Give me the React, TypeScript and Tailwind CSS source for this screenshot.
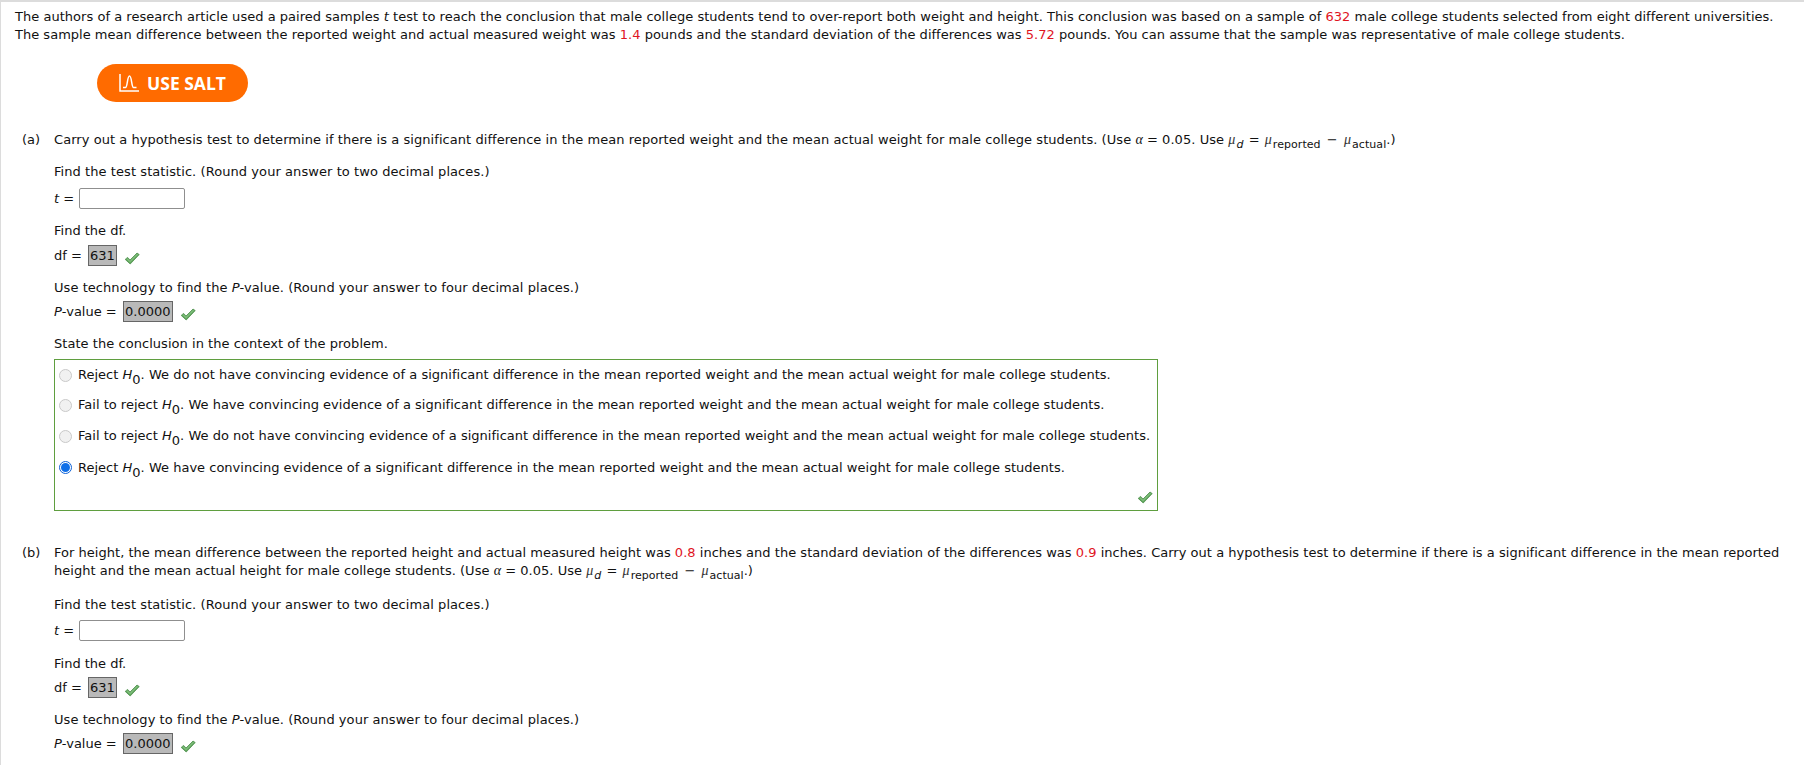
// Paired samples t test question page
import type { ReactNode } from 'react';

function Red({ children }: { children: ReactNode }) {
  return <span className="text-[#e0141e]">{children}</span>;
}

function Mu({ sub, italic }: { sub: string; italic?: boolean }) {
  return (
    <span>
      <i className="font-['Liberation_Serif'] text-[14px] text-[#333]">μ</i>
      <span className={`relative top-[4px] ml-[1px] text-[11px] ${italic ? 'italic' : ''}`}>{sub}</span>
    </span>
  );
}

function H0() {
  return (
    <span>
      <i>H</i>
      <span className="relative top-[5px] text-[13px]">0</span>
    </span>
  );
}

function UseClause() {
  return (
    <>
      (Use <i className="font-['Liberation_Serif'] text-[14px]">α</i> = 0.05. Use <Mu sub="d" italic /> <span className="mx-[1px]">=</span> <Mu sub="reported" /> <span className="mx-[2px]">−</span> <Mu sub="actual" />.)
    </>
  );
}

function Check({ className }: { className?: string }) {
  return (
    <svg width="16" height="13" viewBox="0 0 16 13" className={className}>
      <path d="M1.2 7.4 L3.6 5.4 L6 8 L13 1 L15.2 2.6 L6.2 12 Z" fill="#62a85f" stroke="#4c8f4b" strokeWidth="0.8" strokeLinejoin="round" />
      <path d="M3 6.6 L6 9.6 L13.4 2.2" fill="none" stroke="#9fd39b" strokeWidth="0.8" />
    </svg>
  );
}

function Blank() {
  return <span className="ml-[5px] inline-block h-[21px] w-[106px] rounded-[2px] border border-[#8f8f8f] bg-white" />;
}

function Answer({ value, width }: { value: string; width: string }) {
  return (
    <>
      <span className={`ml-[6px] flex h-[21px] items-center justify-center border border-[#666] bg-[#b9b9b9] text-[13px] ${width}`}>{value}</span>
      <Check className="ml-[7px] mt-[5px]" />
    </>
  );
}

function FieldRow({ mt, children }: { mt: string; children: ReactNode }) {
  return <div className={`flex h-[21px] items-center ${mt}`}>{children}</div>;
}

function Radio({ on }: { on?: boolean }) {
  if (on) {
    return (
      <span className="flex h-[13px] w-[13px] shrink-0 items-center justify-center rounded-full border border-[#0f62d6] bg-white">
        <span className="h-[9px] w-[9px] rounded-full bg-[#0f6fe8]" />
      </span>
    );
  }
  return <span className="h-[13px] w-[13px] shrink-0 rounded-full border border-[#c9c9c9] bg-[#f1f1f1]" />;
}

function Option({ lead, rest, on, h }: { lead: string; rest: string; on?: boolean; h: string }) {
  return (
    <div className={`flex items-center gap-[6px] ${h}`}>
      <Radio on={on} />
      <span className="whitespace-nowrap tracking-[0.01px]">
        {lead} <H0 />. {rest}
      </span>
    </div>
  );
}

function SaltIcon() {
  return (
    <svg width="21" height="18" viewBox="0 0 21 18" fill="none" stroke="white" strokeWidth="1.5">
      <path d="M1 0 V17 H20" />
      <path d="M4 13.5 H6.5 C8.5 13.5 8.2 2 10.5 2 C12.8 2 12.5 13.5 14.5 13.5 H17.5" />
    </svg>
  );
}

export default function App() {
  return (
    <div className="h-[765px] overflow-hidden border-t-2 border-l border-[#dcdcdc] bg-white pl-[14px] font-['DejaVu_Sans','Verdana',sans-serif] text-[13px] leading-[18px] text-[#111]">
      <div className="mt-[6px] whitespace-nowrap">
        <div className="tracking-[0.03px]">
          The authors of a research article used a paired samples <i>t</i> test to reach the conclusion that male college students tend to over-report both weight and height. This conclusion was based on a sample of <Red>632</Red> male college students selected from eight different universities.
        </div>
        <div className="tracking-[0.015px]">
          The sample mean difference between the reported weight and actual measured weight was <Red>1.4</Red> pounds and the standard deviation of the differences was <Red>5.72</Red> pounds. You can assume that the sample was representative of male college students.
        </div>
      </div>

      <div className="ml-[82px] mt-[20px] flex h-[38px] w-[151px] items-center justify-center gap-[7px] rounded-[19px] bg-[#ff6b00] font-['Open_Sans',sans-serif] text-[17.5px] font-bold text-white">
        <SaltIcon />
        <span>USE SALT</span>
      </div>

      <section className="mt-[29px] flex">
        <div className="ml-[7px] w-[32px]">(a)</div>
        <div className="whitespace-nowrap">
          <div className="tracking-[0.055px]">
            Carry out a hypothesis test to determine if there is a significant difference in the mean reported weight and the mean actual weight for male college students. <UseClause />
          </div>
          <div className="mt-[13px] tracking-[0.07px]">Find the test statistic. (Round your answer to two decimal places.)</div>
          <FieldRow mt="mt-[7px]"><i>t</i>&nbsp;=<Blank /></FieldRow>
          <div className="mt-[13px]">Find the df.</div>
          <FieldRow mt="mt-[5px]">df =<Answer value="631" width="w-[29px]" /></FieldRow>
          <div className="mt-[13px] tracking-[0.055px]">Use technology to find the <i>P</i>-value. (Round your answer to four decimal places.)</div>
          <FieldRow mt="mt-[4px]"><span><i>P</i>-value =</span><Answer value="0.0000" width="w-[50px]" /></FieldRow>
          <div className="mt-[13px] tracking-[0.045px]">State the conclusion in the context of the problem.</div>
          <div className="relative mt-[6px] h-[152px] w-[1104px] border border-[#5f9e3f] pl-[4px]">
            <Option h="h-[30px]" lead="Reject" rest="We do not have convincing evidence of a significant difference in the mean reported weight and the mean actual weight for male college students." />
            <Option h="h-[30px]" lead="Fail to reject" rest="We have convincing evidence of a significant difference in the mean reported weight and the mean actual weight for male college students." />
            <Option h="h-[32px]" lead="Fail to reject" rest="We do not have convincing evidence of a significant difference in the mean reported weight and the mean actual weight for male college students." />
            <Option h="h-[31px]" on lead="Reject" rest="We have convincing evidence of a significant difference in the mean reported weight and the mean actual weight for male college students." />
            <Check className="absolute bottom-[6px] right-[4px]" />
          </div>
        </div>
      </section>

      <section className="mt-[33px] flex">
        <div className="ml-[7px] w-[32px]">(b)</div>
        <div className="whitespace-nowrap">
          <div className="tracking-[0.025px]">
            For height, the mean difference between the reported height and actual measured height was <Red>0.8</Red> inches and the standard deviation of the differences was <Red>0.9</Red> inches. Carry out a hypothesis test to determine if there is a significant difference in the mean reported
          </div>
          <div className="tracking-[0.03px]">
            height and the mean actual height for male college students. <UseClause />
          </div>
          <div className="mt-[15px] tracking-[0.07px]">Find the test statistic. (Round your answer to two decimal places.)</div>
          <FieldRow mt="mt-[6px]"><i>t</i>&nbsp;=<Blank /></FieldRow>
          <div className="mt-[14px]">Find the df.</div>
          <FieldRow mt="mt-[4px]">df =<Answer value="631" width="w-[29px]" /></FieldRow>
          <div className="mt-[13px] tracking-[0.055px]">Use technology to find the <i>P</i>-value. (Round your answer to four decimal places.)</div>
          <FieldRow mt="mt-[4px]"><span><i>P</i>-value =</span><Answer value="0.0000" width="w-[50px]" /></FieldRow>
        </div>
      </section>
    </div>
  );
}
